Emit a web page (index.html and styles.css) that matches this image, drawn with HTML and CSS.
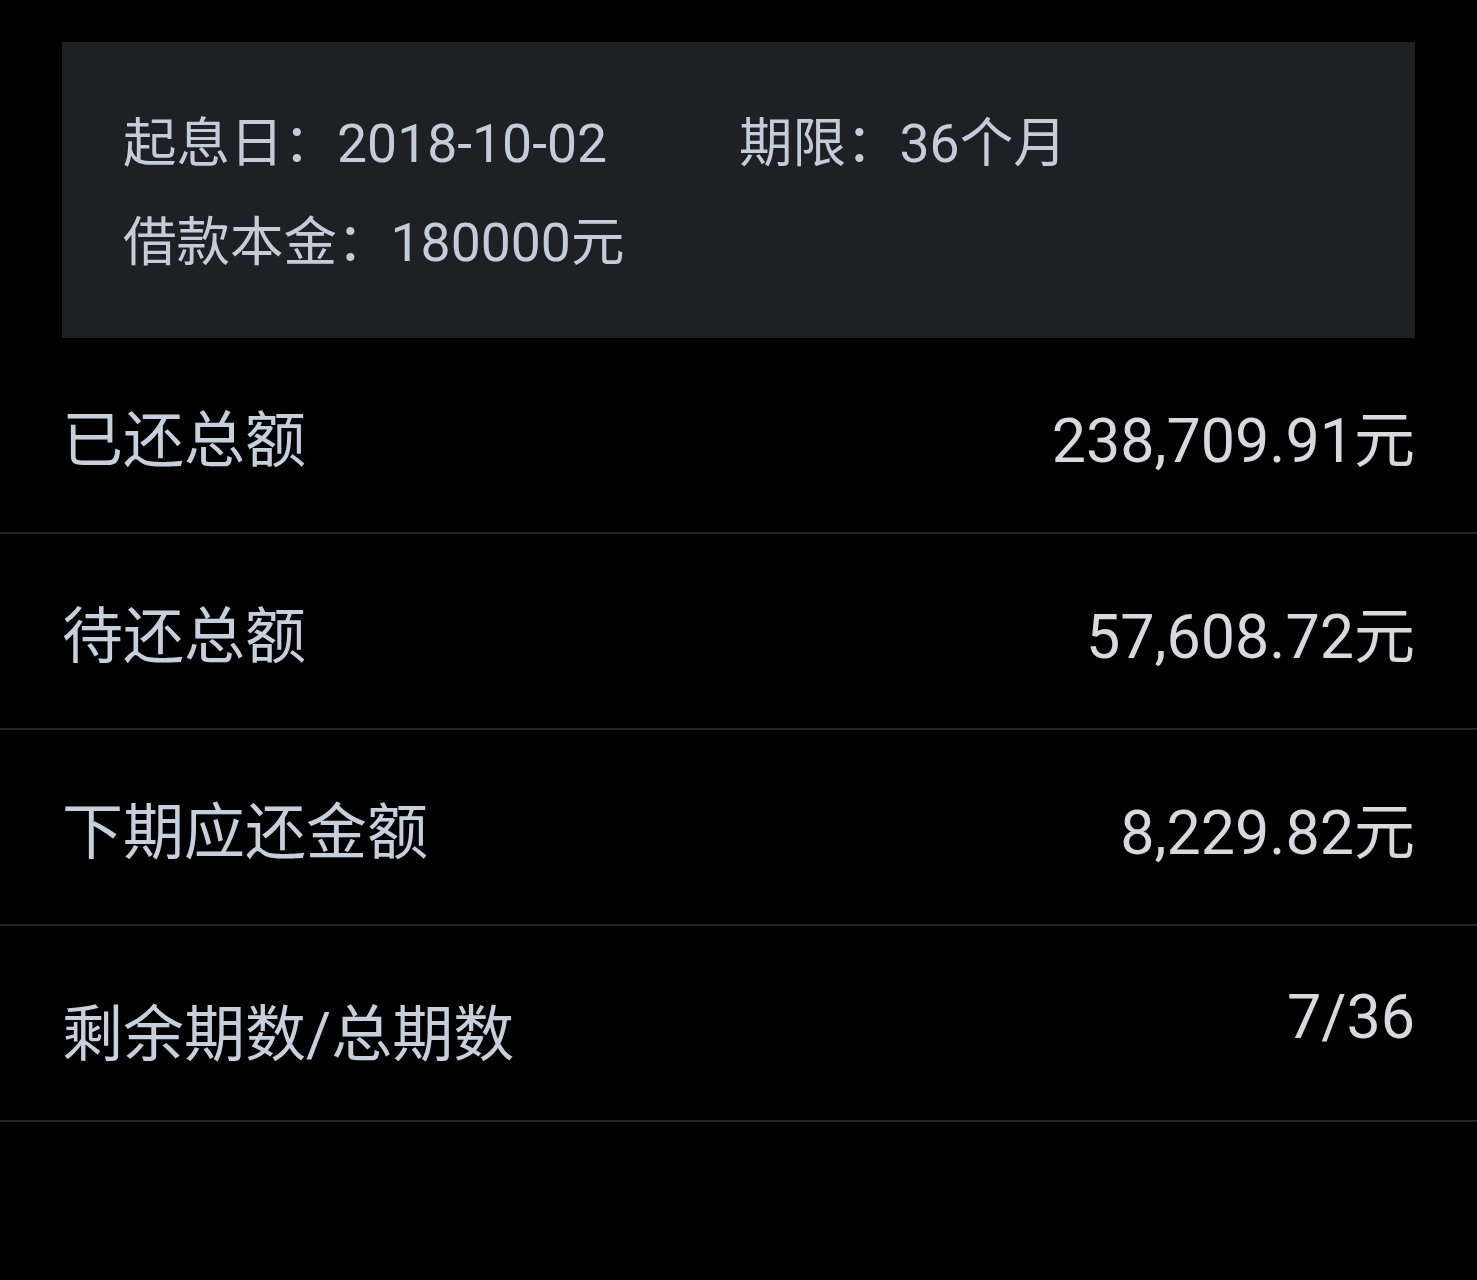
FILE: index.html
```html
<!DOCTYPE html>
<html lang="zh-CN">
<head>
	<meta charset="UTF-8">
	<meta name="viewport" content="width=device-width, initial-scale=1.0">
	<title>借款详情</title>
	<link rel="stylesheet" href="styles.css">
</head>
<body>
	<div class="loan-card">
		<div class="card-line">
			<span class="card-item card-item-wide">起息日：2018-10-02</span>
			<span class="card-item">期限：36个月</span>
		</div>
		<div class="card-line">
			<span class="card-item">借款本金：180000元</span>
		</div>
	</div>

	<ul class="list-summary">
		<li class="item-summary">
			<span class="summary-label">已还总额</span>
			<span class="summary-value">238,709.91元</span>
		</li>
		<li class="item-summary">
			<span class="summary-label">待还总额</span>
			<span class="summary-value">57,608.72元</span>
		</li>
		<li class="item-summary">
			<span class="summary-label">下期应还金额</span>
			<span class="summary-value">8,229.82元</span>
		</li>
		<li class="item-summary last-row">
			<span class="summary-label">剩余期数/总期数</span>
			<span class="summary-value">7/36</span>
		</li>
	</ul>
</body>
</html>
```

FILE: styles.css
```css
body{
	margin: 0; background: #000; min-height: 1280px;
	font-family: Roboto, "Noto Sans CJK SC", sans-serif;
}
.loan-card{
	margin: 42px 62px 0; padding: 52px 60px 46px 61px; background: #1f2023;
	color: #c3ccd8; font-size: 53.5px; line-height: 99px;
}
.card-line{ display: flex; }
.card-item{ white-space: nowrap; }
.card-item-wide{ width: 616px; }

.list-summary{ list-style: none; margin: 0; padding: 0; }
.item-summary{
	display: flex; justify-content: space-between; align-items: center;
	height: 194px; padding: 0 62px 0 62px; border-bottom: 2px solid #222325;
	font-size: 61px;
}
.summary-label{ color: #c6d0dc; }
.summary-value{ color: #d6d9de; }
.last-row .summary-label{ margin-top: 12px; }
.last-row .summary-value{ margin-top: -12px; }
```
